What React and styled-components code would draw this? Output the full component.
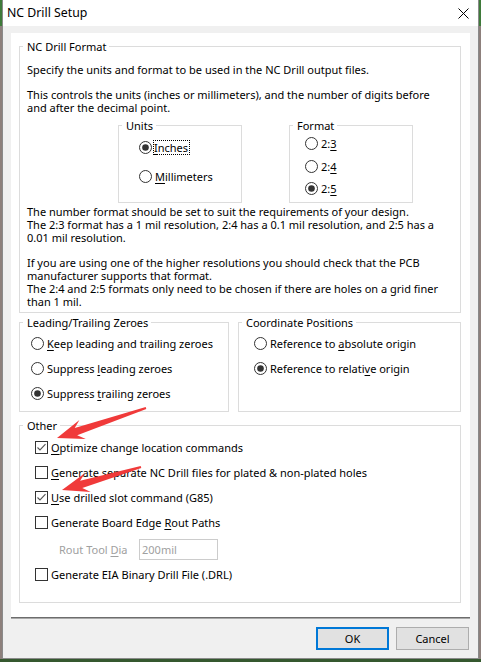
import React from 'react';
import styled, { createGlobalStyle } from 'styled-components';

const GlobalStyle = createGlobalStyle`
  html, body { margin: 0; padding: 0; }
  body {
    background: #8d807c;
    font-family: "Noto Sans", "Open Sans", sans-serif;
    font-size: 11px;
    color: #000;
    overflow: hidden;
  }
  * { box-sizing: border-box; }
`;

const Stage = styled.div`
  position: relative;
  width: 481px;
  height: 662px;
  padding-left: 2px;
  background: linear-gradient(to bottom, #3f7a3a 0 26px, #8d807c 26px 659px, #35582f 659px);
  overflow: hidden;
`;

const Window = styled.div`
  width: 477px;
  border: 1px solid #8a8a8a;
  border-top: none;
  background: #f0f0f0;
  display: flex;
  flex-direction: column;
`;

const TitleBar = styled.div`
  height: 26px;
  background: #fff;
  display: flex;
  align-items: center;
  justify-content: space-between;
  padding-left: 4px;
`;

const Title = styled.span`
  font-size: 12.3px;
  line-height: 16px;
`;

const CloseButton = styled.div`
  width: 30px;
  height: 26px;
  display: flex;
  align-items: center;
  justify-content: center;
`;

const Body = styled.div`
  padding: 7px 8px 0;
  display: flex;
  flex-direction: column;
`;

const Panel = styled.div`
  height: 585px;
  flex: none;
  background: #fff;
  border-bottom: 1px solid #6d6d6d;
  box-shadow: 0 1px 0 #a9a9a9;
  padding: 13px 9px 0 8px;
  display: flex;
  flex-direction: column;
`;

const GroupBox = styled.div`
  border: 1px solid #dcdcdc;
  height: ${(p) => p.$h}px;
  width: ${(p) => (p.$w ? `${p.$w}px` : 'auto')};
  flex: none;
  margin-top: ${(p) => p.$mt || 0}px;
  display: flex;
  flex-direction: column;
`;

const Legend = styled.div`
  align-self: flex-start;
  margin: -7px 0 0 3px;
  padding: 0 3px 0 4px;
  background: #fff;
  height: 13px;
  line-height: 13px;
  white-space: nowrap;
`;

const Content = styled.div`
  padding: ${(p) => p.$pt}px 0 0 ${(p) => p.$pl}px;
  display: flex;
  flex-direction: column;
  gap: ${(p) => p.$gap || 0}px;
`;

const Para = styled.p`
  margin: ${(p) => p.$mt || 0}px 0 0;
  line-height: 12.8px;
  white-space: nowrap;
`;

const BoxRow = styled.div`
  display: flex;
  flex: none;
  gap: ${(p) => p.$gap}px;
  margin: ${(p) => p.$mt}px 0 0 ${(p) => p.$ml || 0}px;
`;

const OptionRow = styled.div`
  display: flex;
  align-items: center;
  height: 13px;
  line-height: 13px;
  white-space: nowrap;
`;

const OptionLabel = styled.span`
  margin-left: ${(p) => (p.$focus ? 2 : 3)}px;
  padding: ${(p) => (p.$focus ? '0 1px 0 0' : '0')};
  outline: ${(p) => (p.$focus ? '1px dotted #000' : 'none')};
  outline-offset: ${(p) => (p.$focus ? '0' : '0')};
  line-height: ${(p) => (p.$focus ? '13px' : '13px')};
`;

const Key = styled.u`
  text-decoration: underline;
  text-underline-offset: 1.5px;
  text-decoration-thickness: 1px;
`;

const RoutRow = styled.div`
  display: flex;
  align-items: center;
  height: 21px;
  margin: 9.8px 0 8.5px 24px;
  white-space: nowrap;
`;

const DisabledLabel = styled.span`
  width: 80px;
  color: #a0a0a0;
`;

const DisabledInput = styled.div`
  width: 79px;
  height: 21px;
  border: 1px solid #cccccc;
  background: #fff;
  color: #a0a0a0;
  padding-left: 2px;
  line-height: 19px;
`;

const Footer = styled.div`
  height: 40px;
  padding: 9px 1px 8px 0;
  display: flex;
  justify-content: flex-end;
  gap: 7px;
`;

const Button = styled.div`
  width: 73px;
  height: 23px;
  background: #e1e1e1;
  border: ${(p) => (p.$primary ? '2px solid #0078d7' : '1px solid #adadad')};
  display: flex;
  align-items: center;
  justify-content: center;
  line-height: 13px;
`;

const Overlay = styled.svg`
  position: absolute;
  left: 0;
  top: 0;
  pointer-events: none;
`;

const Radio = ({ checked }) => (
  <svg width="13" height="13" viewBox="0 0 13 13" style={{ flex: 'none' }}>
    <circle cx="6.5" cy="6.5" r="6" fill="#fff" stroke="#333" strokeWidth="1" />
    {checked && <circle cx="6.5" cy="6.5" r="3.3" fill="#333" />}
  </svg>
);

const Check = ({ checked }) => (
  <svg width="13" height="13" viewBox="0 0 13 13" style={{ flex: 'none' }}>
    <rect x="0.5" y="0.5" width="12" height="12" fill="#fff" stroke="#333" strokeWidth="1" />
    {checked && (
      <polyline points="2.5,6.5 5,9 10.5,3.2" fill="none" stroke="#555" strokeWidth="1.1" />
    )}
  </svg>
);

const RadioOption = ({ checked, focus, children }) => (
  <OptionRow>
    <Radio checked={checked} />
    <OptionLabel $focus={focus}>{children}</OptionLabel>
  </OptionRow>
);

const CheckOption = ({ checked, children }) => (
  <OptionRow>
    <Check checked={checked} />
    <OptionLabel>{children}</OptionLabel>
  </OptionRow>
);

function arrowPoints(tx, ty, px, py, headLen, headHalf, joinBack, joinHalf, tailHalf) {
  const dx = px - tx;
  const dy = py - ty;
  const len = Math.hypot(dx, dy);
  const ux = dx / len;
  const uy = dy / len;
  const nx = -uy;
  const ny = ux;
  const bx = px - ux * headLen;
  const by = py - uy * headLen;
  const jx = px - ux * joinBack;
  const jy = py - uy * joinBack;
  const pts = [
    [px, py],
    [bx + nx * headHalf, by + ny * headHalf],
    [jx + nx * joinHalf, jy + ny * joinHalf],
    [tx + nx * tailHalf, ty + ny * tailHalf],
    [tx - nx * tailHalf, ty - ny * tailHalf],
    [jx - nx * joinHalf, jy - ny * joinHalf],
    [bx - nx * headHalf, by - ny * headHalf],
  ];
  return pts.map((p) => `${p[0].toFixed(1)},${p[1].toFixed(1)}`).join(' ');
}

const RedArrows = () => (
  <Overlay width="481" height="662" viewBox="0 0 481 662">
    <polygon points={arrowPoints(146, 408, 57, 438, 27, 10, 20, 3.8, 1)} fill="#f03a3a" />
    <polygon points={arrowPoints(141, 467, 62, 490, 27, 10, 20, 3.8, 1)} fill="#f03a3a" />
  </Overlay>
);

export default function App() {
  return (
    <>
      <GlobalStyle />
      <Stage>
        <Window>
          <TitleBar>
            <Title>NC Drill Setup</Title>
            <CloseButton>
              <svg width="11" height="11" viewBox="0 0 11 11">
                <path d="M0.5 0.5 L10.5 10.5 M10.5 0.5 L0.5 10.5" stroke="#000" strokeWidth="1" />
              </svg>
            </CloseButton>
          </TitleBar>
          <Body>
            <Panel>
              <GroupBox $h={267}>
                <Legend>NC Drill Format</Legend>
                <Content $pt={10.5} $pl={7}>
                  <Para>Specify the units and format to be used in the NC Drill output files.</Para>
                  <Para $mt={12.8}>
                    This controls the units (inches or millimeters), and the number of digits before
                    <br />
                    and after the decimal point.
                  </Para>
                  <BoxRow $gap={47} $mt={10.3} $ml={91}>
                    <GroupBox $h={78} $w={124}>
                      <Legend>Units</Legend>
                      <Content $pt={9.2} $pl={20} $gap={16}>
                        <RadioOption checked focus>
                          <Key>I</Key>nches
                        </RadioOption>
                        <RadioOption>
                          <Key>M</Key>illimeters
                        </RadioOption>
                      </Content>
                    </GroupBox>
                    <GroupBox $h={78} $w={124}>
                      <Legend>Format</Legend>
                      <Content $pt={4.8} $pl={15} $gap={9.8}>
                        <RadioOption>
                          2:<Key>3</Key>
                        </RadioOption>
                        <RadioOption>
                          2:<Key>4</Key>
                        </RadioOption>
                        <RadioOption checked>
                          2:<Key>5</Key>
                        </RadioOption>
                      </Content>
                    </GroupBox>
                  </BoxRow>
                  <Para $mt={3.3}>
                    The number format should be set to suit the requirements of your design.
                    <br />
                    The 2:3 format has a 1 mil resolution, 2:4 has a 0.1 mil resolution, and 2:5 has a
                    <br />
                    0.01 mil resolution.
                  </Para>
                  <Para $mt={12.8}>
                    If you are using one of the higher resolutions you should check that the PCB
                    <br />
                    manufacturer supports that format.
                    <br />
                    The 2:4 and 2:5 formats only need to be chosen if there are holes on a grid finer
                    <br />
                    than 1 mil.
                  </Para>
                </Content>
              </GroupBox>

              <BoxRow $gap={9} $mt={9}>
                <GroupBox $h={90} $w={210}>
                  <Legend>Leading/Trailing Zeroes</Legend>
                  <Content $pt={8} $pl={11} $gap={12}>
                    <RadioOption>
                      <Key>K</Key>eep leading and trailing zeroes
                    </RadioOption>
                    <RadioOption>
                      Suppress <Key>l</Key>eading zeroes
                    </RadioOption>
                    <RadioOption checked>
                      Suppress <Key>t</Key>railing zeroes
                    </RadioOption>
                  </Content>
                </GroupBox>
                <GroupBox $h={90} $w={223}>
                  <Legend>Coordinate Positions</Legend>
                  <Content $pt={8} $pl={15} $gap={12}>
                    <RadioOption>
                      Reference to <Key>a</Key>bsolute origin
                    </RadioOption>
                    <RadioOption checked>
                      Reference to relati<Key>v</Key>e origin
                    </RadioOption>
                  </Content>
                </GroupBox>
              </BoxRow>

              <GroupBox $h={178} $mt={13}>
                <Legend>Other</Legend>
                <Content $pt={9.2} $pl={15} $gap={12}>
                  <CheckOption checked>
                    <Key>O</Key>ptimize change location commands
                  </CheckOption>
                  <CheckOption>
                    <Key>G</Key>enerate separate NC Drill files for plated &amp; non-plated holes
                  </CheckOption>
                  <CheckOption checked>
                    <Key>U</Key>se drilled slot command (G85)
                  </CheckOption>
                  <CheckOption>
                    Generate Board Edge <Key>R</Key>out Paths
                  </CheckOption>
                </Content>
                <Content $pt={0} $pl={15}>
                  <RoutRow>
                    <DisabledLabel>
                      Rout Tool <Key>D</Key>ia
                    </DisabledLabel>
                    <DisabledInput>200mil</DisabledInput>
                  </RoutRow>
                  <CheckOption>Generate EIA Binary Drill File (.DRL)</CheckOption>
                </Content>
              </GroupBox>
            </Panel>
            <Footer>
              <Button $primary>OK</Button>
              <Button>Cancel</Button>
            </Footer>
          </Body>
        </Window>
        <RedArrows />
      </Stage>
    </>
  );
}
